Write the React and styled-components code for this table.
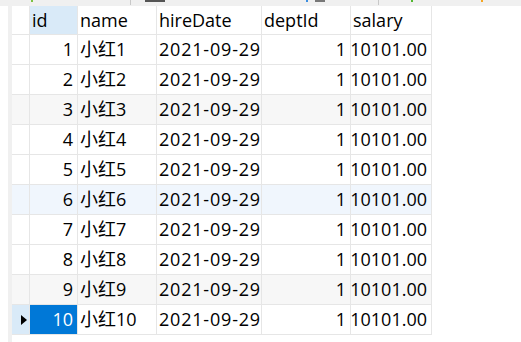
import React from "react";
import styled, { createGlobalStyle } from "styled-components";

const Global = createGlobalStyle`
  html, body { margin: 0; padding: 0; background: #ffffff; }
  #root { width: 521px; height: 342px; }
`;

const Page = styled.div`
  width: 521px;
  height: 342px;
  background: #ffffff;
  display: flex;
  flex-direction: column;
  overflow: hidden;
  font-family: "Open Sans", "Noto Sans CJK SC", sans-serif;
  font-size: 18px;
  color: #000;
`;

const TopStrip = styled.div`
  height: 6px;
  flex: none;
  background: #f0f0f0;
`;

const Main = styled.div`
  flex: 1;
  display: flex;
  align-items: flex-start;
  min-height: 0;
`;

const Margin = styled.div`
  width: 8px;
  align-self: stretch;
  background: #ffffff;
  flex: none;
`;

const Gutter = styled.div`
  width: 4px;
  align-self: stretch;
  background: #f0f0f0;
  flex: none;
`;

const Grid = styled.div`
  display: grid;
  grid-template-columns: 18px 48px 79px 105px 89px 81px;
  grid-template-rows: 29px;
  grid-auto-rows: 30px;
`;

const Cell = styled.div`
  box-sizing: border-box;
  border-right: 1px solid #e6e6e6;
  border-bottom: 1px solid #e6e6e6;
  background: ${(p) => p.$bg || "transparent"};
  color: ${(p) => (p.$selected ? "#ffffff" : "#000000")};
  display: flex;
  align-items: center;
  justify-content: ${(p) => (p.$right ? "flex-end" : "flex-start")};
  padding: ${(p) => (p.$right ? "0 4px 1px 0" : "0 0 1px 2px")};
  letter-spacing: ${(p) => (p.$spaced ? "0.8px" : "0")};
  white-space: nowrap;
  overflow: hidden;
  line-height: 1;
`;

const HeadCell = styled(Cell)`
  padding: 0 0 1px 2px;
  background: ${(p) => (p.$active ? "#d9eaf8" : "#ffffff")};
`;

const RowHead = styled(Cell)`
  padding: 0;
  justify-content: center;
  background: ${(p) => (p.$current ? "#d9eaf8" : p.$bg || "transparent")};
`;

const Arrow = styled.span`
  width: 0;
  height: 0;
  margin-left: 6px;
  border-top: 5px solid transparent;
  border-bottom: 5px solid transparent;
  border-left: 6px solid #000;
`;

const Row = styled.div`
  display: contents;
`;

const rowBg = (i) => {
  if (i === 3 || i === 9) return "#f7f7f7";
  if (i === 6) return "#f0f6fd";
  return "#ffffff";
};

const rows = Array.from({ length: 10 }, (_, k) => k + 1);

function ToolbarBits() {
  return (
    <svg width="521" height="6" style={{ display: "block" }}>
      <rect x="31" y="0" width="2" height="2" fill="#7cc242" />
      <rect x="130" y="0" width="1" height="5" fill="#c8c8c8" />
      <rect x="145" y="0" width="20" height="2" fill="#555" />
      <rect x="306" y="0" width="2" height="2" fill="#3b8ee0" />
      <rect x="315" y="0" width="10" height="2" fill="#777" />
      <rect x="378" y="0" width="1" height="5" fill="#c8c8c8" />
      <rect x="411" y="0" width="2" height="2" fill="#52b830" />
      <rect x="481" y="0" width="2" height="2" fill="#f5a623" />
    </svg>
  );
}

export default function App() {
  return (
    <Page>
      <Global />
      <TopStrip>
        <ToolbarBits />
      </TopStrip>
      <Main>
        <Margin />
        <Gutter />
        <Grid>
          <Row>
            <HeadCell />
            <HeadCell $active>id</HeadCell>
            <HeadCell>name</HeadCell>
            <HeadCell>hireDate</HeadCell>
            <HeadCell>deptId</HeadCell>
            <HeadCell>salary</HeadCell>
          </Row>
          {rows.map((i) => {
            const bg = rowBg(i);
            const cur = i === 10;
            return (
              <Row key={i}>
                <RowHead $bg={bg} $current={cur}>
                  {cur && <Arrow />}
                </RowHead>
                <Cell $right $bg={cur ? "#0078d7" : bg} $selected={cur}>
                  {i}
                </Cell>
                <Cell $bg={bg}>小红{i}</Cell>
                <Cell $bg={bg} $spaced>2021-09-29</Cell>
                <Cell $right $bg={bg}>1</Cell>
                <Cell $right $bg={bg}>10101.00</Cell>
              </Row>
            );
          })}
        </Grid>
      </Main>
    </Page>
  );
}
